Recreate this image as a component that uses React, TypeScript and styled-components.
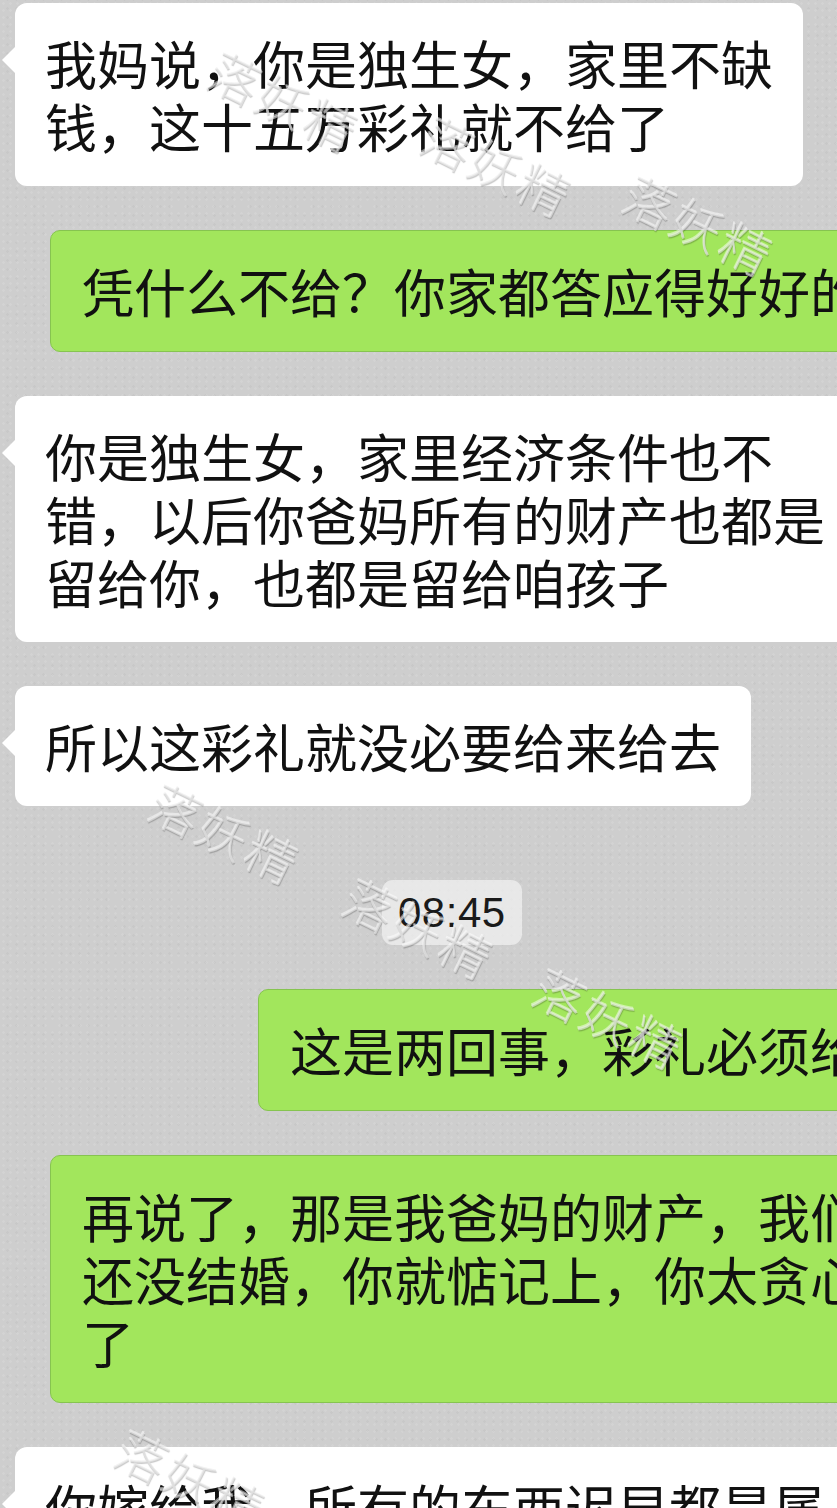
import styled, { createGlobalStyle } from "styled-components";

const GlobalStyle = createGlobalStyle`
  html, body {
    margin: 0;
    padding: 0;
    background: #cecece;
  }
`;

const Screen = styled.div`
  position: relative;
  width: 837px;
  height: 1508px;
  overflow: hidden;
  box-sizing: border-box;
  padding-top: 3px;
  display: flex;
  flex-direction: column;
  gap: 44px;
  background-color: #cecece;
  background-image: radial-gradient(rgba(255, 255, 255, 0.1) 1px, transparent 1.5px),
    radial-gradient(rgba(0, 0, 0, 0.03) 1px, transparent 1.5px);
  background-size: 7px 7px, 9px 9px;
  background-position: 0 0, 3px 4px;
  font-family: "Noto Sans CJK SC", "Noto Sans", sans-serif;
`;

const Row = styled.div<{ $indent: number; $top?: number }>`
  display: flex;
  justify-content: flex-start;
  padding-left: ${(p) => p.$indent}px;
  margin-top: ${(p) => p.$top ?? 0}px;
`;

const Bubble = styled.div<{ $mine?: boolean }>`
  position: relative;
  flex-shrink: 0;
  box-sizing: border-box;
  padding: 28px ${(p) => (p.$mine ? 31 : 30)}px 29px;
  border-radius: ${(p) => (p.$mine ? 10 : 12)}px;
  background: ${(p) => (p.$mine ? "#a2e65c" : "#ffffff")};
  border: ${(p) => (p.$mine ? "1px solid #86c450" : "none")};
  color: #111;
  font-size: 52px;
  line-height: 63px;
  white-space: nowrap;

  ${(p) =>
    !p.$mine &&
    `
    &::before {
      content: "";
      position: absolute;
      left: -13px;
      top: 44px;
      border-style: solid;
      border-width: 13px 13px 13px 0;
      border-color: transparent #ffffff transparent transparent;
    }
  `}
`;

const Line = styled.div``;

const TimeStamp = styled.div`
  height: 65px;
  line-height: 65px;
  padding: 0 16px;
  border-radius: 11px;
  background: rgba(240, 240, 240, 0.75);
  color: #1a1a1a;
  font-family: "Liberation Sans", Arial, sans-serif;
  font-size: 42px;
  letter-spacing: 0.5px;
`;

const Overlay = styled.div`
  position: absolute;
  inset: 0;
  pointer-events: none;
`;

const Watermark = styled.div<{ $x: number; $y: number }>`
  position: absolute;
  left: ${(p) => p.$x}px;
  top: ${(p) => p.$y}px;
  transform: translate(-50%, -50%) rotate(26deg);
  font-family: "Noto Sans CJK SC", sans-serif;
  font-weight: 300;
  font-size: 50px;
  letter-spacing: 3px;
  white-space: nowrap;
  color: rgba(236, 236, 236, 0.6);
  text-shadow: 1px 1px 1px rgba(0, 0, 0, 0.22), -1px -1px 0 rgba(255, 255, 255, 0.5);
`;

interface Message {
  mine: boolean;
  indent: number;
  lines: string[];
}

const before: Message[] = [
  { mine: false, indent: 15, lines: ["我妈说，你是独生女，家里不缺", "钱，这十五万彩礼就不给了"] },
  { mine: true, indent: 50, lines: ["凭什么不给？你家都答应得好好的"] },
  {
    mine: false,
    indent: 15,
    lines: ["你是独生女，家里经济条件也不", "错，以后你爸妈所有的财产也都是", "留给你，也都是留给咱孩子"],
  },
  { mine: false, indent: 15, lines: ["所以这彩礼就没必要给来给去"] },
];

const after: Message[] = [
  { mine: true, indent: 258, lines: ["这是两回事，彩礼必须给"] },
  {
    mine: true,
    indent: 50,
    lines: ["再说了，那是我爸妈的财产，我们", "还没结婚，你就惦记上，你太贪心", "了"],
  },
  { mine: false, indent: 15, lines: ["你嫁给我，所有的东西迟早都是属"] },
];

const marks = [
  { x: 285, y: 100 },
  { x: 498, y: 165 },
  { x: 700, y: 224 },
  { x: 226, y: 832 },
  { x: 420, y: 927 },
  { x: 610, y: 1017 },
  { x: 192, y: 1478 },
];

function renderMessage(m: Message, i: number) {
  return (
    <Row key={i} $indent={m.indent}>
      <Bubble $mine={m.mine}>
        {m.lines.map((l, j) => (
          <Line key={j}>{l}</Line>
        ))}
      </Bubble>
    </Row>
  );
}

function App() {
  return (
    <>
      <GlobalStyle />
      <Screen>
        {before.map(renderMessage)}
        <Row $indent={382} $top={30}>
          <TimeStamp>08:45</TimeStamp>
        </Row>
        {after.map(renderMessage)}
        <Overlay>
          {marks.map((m, i) => (
            <Watermark key={i} $x={m.x} $y={m.y}>
              落妖精
            </Watermark>
          ))}
        </Overlay>
      </Screen>
    </>
  );
}

export default App;
